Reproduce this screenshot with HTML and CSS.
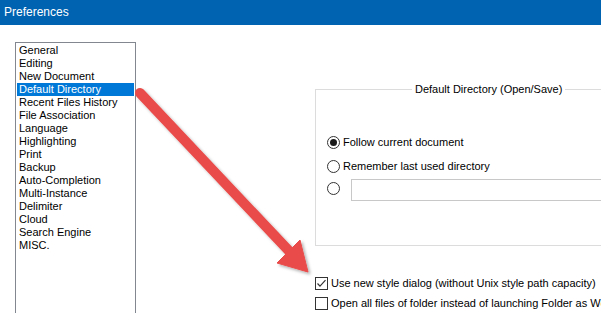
FILE: index.html
```html
<!DOCTYPE html>
<html>
<head>
<meta charset="utf-8">
<link rel="stylesheet" href="styles.css">
</head>
<body>
<div class="window">
  <div class="titlebar">Preferences</div>
  <div class="content">
    <ul class="list">
      <li>General</li>
      <li>Editing</li>
      <li>New Document</li>
      <li class="selected">Default Directory</li>
      <li>Recent Files History</li>
      <li>File Association</li>
      <li>Language</li>
      <li>Highlighting</li>
      <li>Print</li>
      <li>Backup</li>
      <li>Auto-Completion</li>
      <li>Multi-Instance</li>
      <li>Delimiter</li>
      <li>Cloud</li>
      <li>Search Engine</li>
      <li>MISC.</li>
    </ul>
    <div class="panel">
      <fieldset class="group">
        <legend>Default Directory (Open/Save)</legend>
        <div class="options">
          <label class="opt"><span class="radio checked"></span><span class="lbl">Follow current document</span></label>
          <label class="opt"><span class="radio"></span><span class="lbl">Remember last used directory</span></label>
          <label class="opt opt-path"><span class="radio"></span><span class="textbox"></span></label>
        </div>
      </fieldset>
      <div class="checks">
        <label class="chk"><span class="box"><svg viewBox="0 0 13 13" width="13" height="13"><polyline points="2.5,6.5 5,9.2 10.5,3.2" fill="none" stroke="#333" stroke-width="1.2"/></svg></span><span class="lbl">Use new style dialog (without Unix style path capacity)</span></label>
        <label class="chk"><span class="box"></span><span class="lbl">Open all files of folder instead of launching Folder as Workspace on folder dropping</span></label>
      </div>
    </div>
  </div>
  <svg class="arrow" width="601" height="313" viewBox="0 0 601 313">
    <defs>
      <filter id="sh" x="-10%" y="-10%" width="130%" height="130%">
        <feDropShadow dx="2" dy="2" stdDeviation="1.5" flood-color="#000" flood-opacity="0.3"/>
      </filter>
    </defs>
    <g filter="url(#sh)" fill="#e84c4a" stroke="#e84c4a">
      <line x1="140" y1="93" x2="290" y2="252" stroke-width="10" stroke-linecap="round"/>
      <polygon points="277,263 300,240 308,272" stroke-width="1" stroke-linejoin="round"/>
    </g>
  </svg>
</div>
</body>
</html>
```
FILE: styles.css
```css
html, body {
  margin: 0;
  padding: 0;
  background: #ffffff;
}
.window {
  position: relative;
  width: 601px;
  height: 313px;
  overflow: hidden;
  background: #ffffff;
  font-family: "Liberation Sans", Arial, sans-serif;
  font-size: 11px;
  color: #000;
}
.titlebar {
  height: 25px;
  line-height: 25px;
  background: #0063b1;
  color: #fff;
  font-size: 12px;
  padding-left: 4px;
}
.content {
  display: flex;
  align-items: flex-start;
  gap: 179px;
  padding: 17px 0 0 15px;
}
.list {
  list-style: none;
  margin: 0;
  padding: 1px;
  width: 121px;
  height: 300px;
  box-sizing: border-box;
  border: 1px solid #828790;
  flex: none;
}
.list li {
  height: 13px;
  line-height: 13px;
  padding-left: 2px;
  white-space: nowrap;
}
.list li.selected {
  background: #0078d7;
  color: #fff;
}
.panel {
  flex: none;
  width: 400px;
  margin-top: 41px;
}
.group {
  margin: 0;
  padding: 0;
  min-width: 0;
  width: 400px;
  box-sizing: border-box;
  border: 1px solid #dcdcdc;
  height: 163px;
}
.group legend {
  margin-left: 96px;
  padding: 0 3px;
  line-height: 13px;
}
.options {
  padding: 34px 0 0 11px;
}
.opt {
  display: flex;
  align-items: center;
  height: 24px;
}
.opt-path {
  height: 22px;
  margin-top: 1px;
  align-items: flex-start;
}
.opt-path .radio {
  margin-top: 3px;
}
.radio {
  width: 13px;
  height: 13px;
  box-sizing: border-box;
  border: 1px solid #333;
  border-radius: 50%;
  flex: none;
  display: flex;
  align-items: center;
  justify-content: center;
}
.radio.checked::after {
  content: "";
  width: 7px;
  height: 7px;
  border-radius: 50%;
  background: #1a1a1a;
}
.opt .lbl {
  margin-left: 3px;
  white-space: nowrap;
}
.textbox {
  margin-left: 11px;
  width: 300px;
  height: 22px;
  box-sizing: border-box;
  border: 1px solid #c8c8c8;
  flex: none;
}
.checks {
  margin-top: 27px;
}
.chk {
  display: flex;
  align-items: center;
  height: 20px;
  white-space: nowrap;
}
.box {
  width: 13px;
  height: 13px;
  box-sizing: border-box;
  border: 1px solid #333;
  flex: none;
  display: flex;
  align-items: center;
  justify-content: center;
}
.box svg {
  display: block;
  flex: none;
}
.chk .lbl {
  margin-left: 3px;
}
.arrow {
  position: absolute;
  left: 0;
  top: 0;
  pointer-events: none;
}
```
